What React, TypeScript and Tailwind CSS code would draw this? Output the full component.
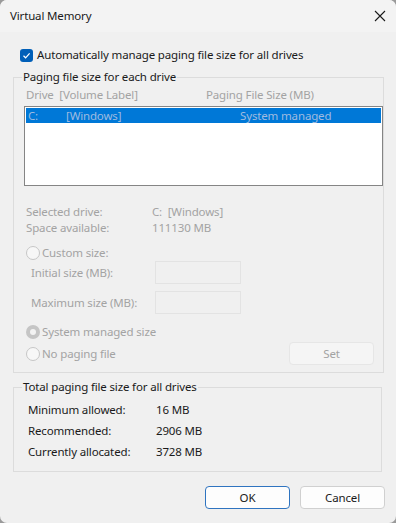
import React from "react";

function Radio() {
  return (
    <span className="relative inline-flex w-[14px] h-[14px] rounded-full border border-[#c6c6c6] bg-[#f7f7f7] items-center justify-center shrink-0" />
  );
}

function CheckedRadio() {
  return (
    <span className="inline-flex w-[14px] h-[14px] rounded-full bg-[#c5c5c5] items-center justify-center shrink-0">
      <span className="w-[6px] h-[6px] rounded-full bg-[#f3f3f3]" />
    </span>
  );
}

export default function App() {
  return (
    <div className="w-[396px] h-[523px] bg-[#9a9a9a] overflow-hidden">
      <div className="w-[396px] h-[523px] rounded-[7px] overflow-hidden bg-[#f0f0f0] text-[11.5px] tracking-[-0.15px] leading-[16px] text-[#1a1a1a] font-['Noto_Sans',sans-serif] flex flex-col">
        {/* Title bar */}
        <div className="h-[32px] bg-[#f3f3f3] flex items-center justify-between pl-[10px] pr-[10px] shrink-0">
          <span className="text-[11.5px] text-[#1a1a1a]">Virtual Memory</span>
          <svg width="12" height="12" viewBox="0 0 12 12">
            <path d="M1 1 L11 11 M11 1 L1 11" stroke="#1a1a1a" strokeWidth="1.1" />
          </svg>
        </div>

        {/* Body */}
        <div className="flex flex-col px-[13px] pt-[15px]">
          {/* Checkbox row */}
          <div className="flex items-center h-[16px] pl-[7px]">
            <span className="w-[13px] h-[13px] rounded-[3px] bg-[#005fb8] flex items-center justify-center">
              <svg width="9" height="9" viewBox="0 0 9 9">
                <path d="M1.5 4.8 L3.6 6.8 L7.6 2.3" stroke="#ffffff" strokeWidth="1.2" fill="none" />
              </svg>
            </span>
            <span className="ml-[4px]">Automatically manage paging file size for all drives</span>
          </div>

          {/* Group 1 */}
          <fieldset className="mt-[6px] border border-[#dcdcdc] w-[369px] p-0 m-0">
            <legend className="ml-[8px] px-[1px] h-[16px]">Paging file size for each drive</legend>
            <div className="flex flex-col pl-[10px] pr-0 pb-[7px]">
              <div className="flex h-[16px] mt-[2px] text-[#a3a3a3]">
                <span className="ml-[2px] w-[180px]">Drive&nbsp; [Volume Label]</span>
                <span>Paging File Size (MB)</span>
              </div>
              <div className="mt-[3px] w-[359px] h-[80px] border border-[#858585] bg-white p-[1px]">
                <div className="h-[15px] bg-[#0078d7] flex items-center text-[#9fbbe0] leading-[15px]">
                  <span className="ml-[2px] w-[38px]">C:</span>
                  <span className="w-[174px]">[Windows]</span>
                  <span>System managed</span>
                </div>
              </div>

              <div className="mt-[18px] flex flex-col text-[#a3a3a3]">
                <div className="flex h-[16px]">
                  <span className="ml-[2px] w-[126px]">Selected drive:</span>
                  <span>C:&nbsp; [Windows]</span>
                </div>
                <div className="flex h-[16px]">
                  <span className="ml-[2px] w-[126px]">Space available:</span>
                  <span>111130 MB</span>
                </div>
              </div>

              <div className="mt-[9px] flex items-center h-[16px] ml-[2px] text-[#a3a3a3]">
                <Radio />
                <span className="ml-[2px]">Custom size:</span>
              </div>

              <div className="flex items-center h-[23px] text-[#a3a3a3]">
                <span className="ml-[7px] w-[124px]">Initial size (MB):</span>
                <span className="w-[86px] h-[23px] border border-[#e3e3e3] bg-[#f0f0f0]" />
              </div>
              <div className="mt-[7px] flex items-center h-[23px] text-[#a3a3a3]">
                <span className="ml-[7px] w-[124px]">Maximum size (MB):</span>
                <span className="w-[86px] h-[23px] border border-[#e3e3e3] bg-[#f0f0f0]" />
              </div>

              <div className="mt-[10px] flex items-center h-[16px] ml-[2px] text-[#a3a3a3]">
                <CheckedRadio />
                <span className="ml-[2px]">System managed size</span>
              </div>
              <div className="mt-[2px] flex items-center h-[23px] ml-[2px] text-[#a3a3a3]">
                <Radio />
                <span className="ml-[2px]">No paging file</span>
                <span className="ml-auto mr-[9px] w-[85px] h-[23px] rounded-[4px] border border-[#e6e6e6] bg-[#f5f5f5] flex items-center justify-center">
                  Set
                </span>
              </div>
            </div>
          </fieldset>

          {/* Group 2 */}
          <fieldset className="mt-[6px] border border-[#dcdcdc] w-[369px] p-0 m-0">
            <legend className="ml-[8px] px-[1px] h-[16px]">Total paging file size for all drives</legend>
            <div className="flex flex-col pl-[14px] pt-[7px] pb-[11px] gap-[5px]">
              <div className="flex h-[16px]">
                <span className="w-[128px]">Minimum allowed:</span>
                <span>16 MB</span>
              </div>
              <div className="flex h-[16px]">
                <span className="w-[128px]">Recommended:</span>
                <span>2906 MB</span>
              </div>
              <div className="flex h-[16px]">
                <span className="w-[128px]">Currently allocated:</span>
                <span>3728 MB</span>
              </div>
            </div>
          </fieldset>

          {/* Buttons */}
          <div className="mt-[14px] flex justify-end gap-[10px] mr-[-2px]">
            <button className="w-[85px] h-[23px] rounded-[4px] border border-[#2f74c0] bg-[#fdfdfd] flex items-center justify-center">
              OK
            </button>
            <button className="w-[85px] h-[23px] rounded-[4px] border border-[#d0d0d0] bg-[#fdfdfd] flex items-center justify-center">
              Cancel
            </button>
          </div>
        </div>
      </div>
    </div>
  );
}
